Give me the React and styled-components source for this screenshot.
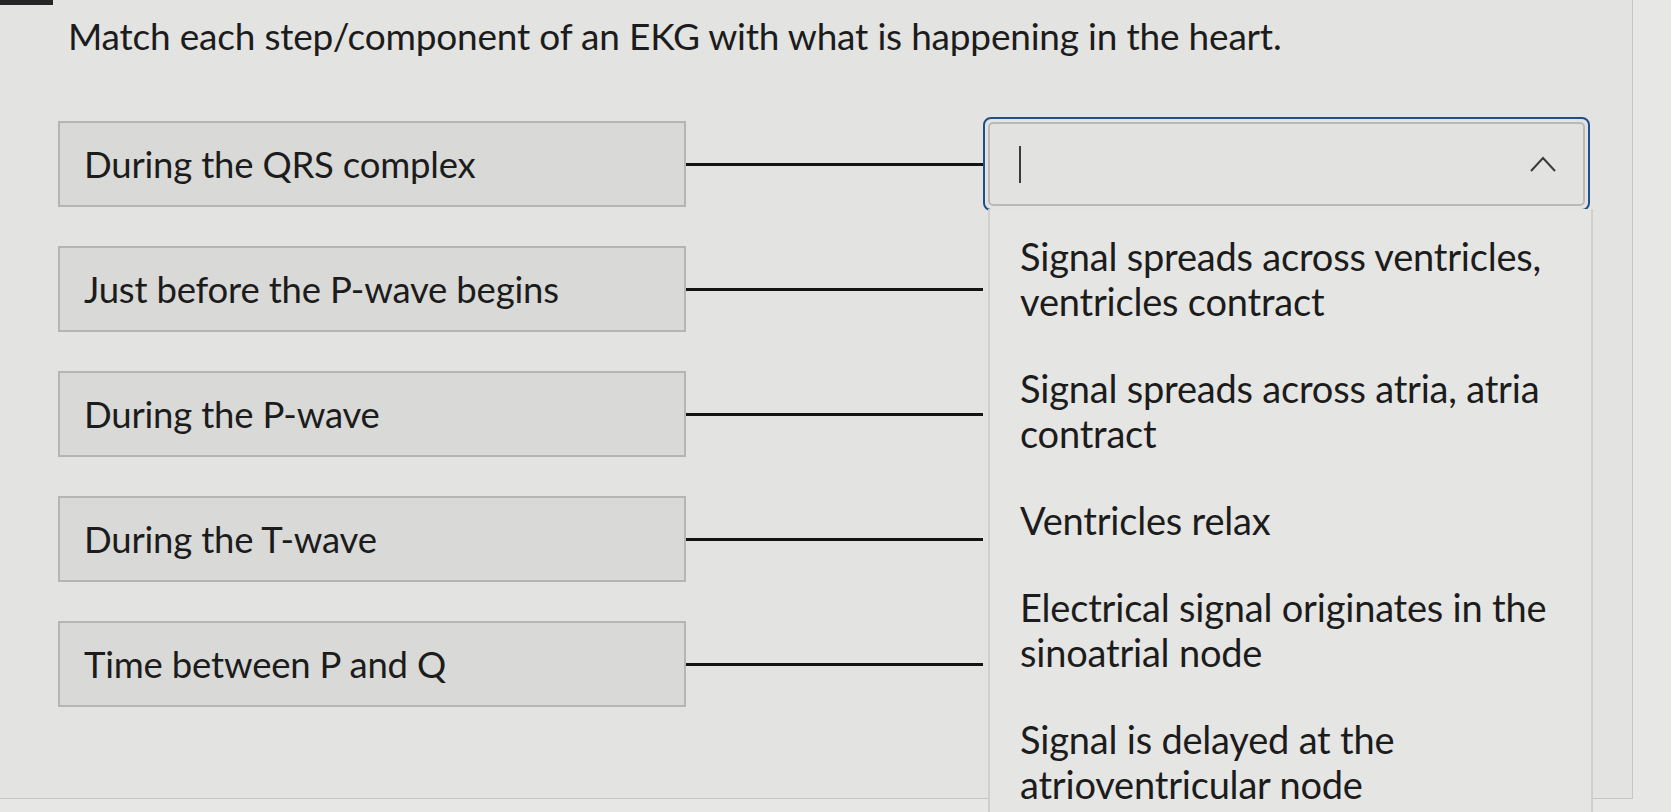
import React from 'react';
import styled, { createGlobalStyle } from 'styled-components';

const GlobalStyle = createGlobalStyle`
  html, body {
    margin: 0;
    padding: 0;
    background: #e7e7e5;
    font-family: Lato, 'Open Sans', sans-serif;
    color: #1c1c1c;
  }
`;

const Page = styled.div`
  width: 1671px;
  height: 812px;
  overflow: hidden;
  display: flex;
`;

const Panel = styled.main`
  width: 1633px;
  height: 799px;
  box-sizing: border-box;
  flex-shrink: 0;
  background: #e3e3e1;
  border-right: 1px solid #c6c6c4;
  border-bottom: 1px solid #c6c6c4;
  padding-left: 58px;
  display: flex;
  flex-direction: column;
`;

const TopTab = styled.div`
  width: 53px;
  height: 5px;
  margin-left: -58px;
  background: #262626;
`;

const Title = styled.h1`
  margin: 9px 0 0 10px;
  font-size: 37px;
  font-weight: 400;
  line-height: 44px;
  letter-spacing: -0.2px;
  white-space: nowrap;
`;

const Rows = styled.div`
  margin-top: 59px;
  display: flex;
  flex-direction: column;
  gap: 31px;
`;

const Row = styled.div`
  height: 94px;
  display: flex;
  align-items: center;
`;

const Prompt = styled.div`
  width: 628px;
  height: 86px;
  box-sizing: border-box;
  flex-shrink: 0;
  display: flex;
  align-items: center;
  padding-left: 24px;
  background: #d9d9d7;
  border: 2px solid #b5b5b3;
  font-size: 36.5px;
  letter-spacing: -0.2px;
`;

const Connector = styled.div`
  width: 297px;
  height: 3px;
  background: #141414;
`;

const SelectWrap = styled.div`
  position: relative;
  z-index: ${(p) => (p.$open ? 2 : 1)};
  width: 607px;
  height: 94px;
  padding: 3px;
  box-sizing: border-box;
  border-radius: 8px;
  border: 2px solid ${(p) => (p.$open ? '#1f4f88' : 'transparent')};
`;

const Select = styled.div`
  height: 100%;
  box-sizing: border-box;
  border: 2px solid #b9b9b7;
  border-radius: 5px;
  background: #e2e2e0;
  display: flex;
  align-items: center;
  justify-content: space-between;
  padding: 0 26px 0 29px;
`;

const Caret = styled.span`
  width: 2px;
  height: 37px;
  background: #3a3a3a;
`;

const Menu = styled.ul`
  position: absolute;
  top: 100%;
  left: 3px;
  right: -5px;
  height: 620px;
  margin: 0;
  padding: 4px 20px 0 30px;
  list-style: none;
  background: #e5e5e3;
  border-left: 2px solid #d0d0ce;
  border-right: 2px solid #cfcfcd;
`;

const Option = styled.li`
  padding: 21px 0;
  font-size: 38px;
  line-height: 45px;
  letter-spacing: -0.2px;
`;

const prompts = [
  'During the QRS complex',
  'Just before the P-wave begins',
  'During the P-wave',
  'During the T-wave',
  'Time between P and Q',
];

const choices = [
  'Signal spreads across ventricles, ventricles contract',
  'Signal spreads across atria, atria contract',
  'Ventricles relax',
  'Electrical signal originates in the sinoatrial node',
  'Signal is delayed at the atrioventricular node',
];

const ChevronUp = () => (
  <svg width="28" height="18" viewBox="0 0 28 18" fill="none">
    <path d="M2 16 L14 3 L26 16" stroke="#3a3a3a" strokeWidth="2" />
  </svg>
);

export default function App() {
  return (
    <Page>
      <GlobalStyle />
      <Panel>
        <TopTab />
        <Title>Match each step/component of an EKG with what is happening in the heart.</Title>
        <Rows>
          {prompts.map((text, i) => (
            <Row key={text}>
              <Prompt>{text}</Prompt>
              <Connector />
              <SelectWrap $open={i === 0}>
                <Select>
                  {i === 0 ? <Caret /> : <span />}
                  {i === 0 && <ChevronUp />}
                </Select>
                {i === 0 && (
                  <Menu>
                    {choices.map((c) => (
                      <Option key={c}>{c}</Option>
                    ))}
                  </Menu>
                )}
              </SelectWrap>
            </Row>
          ))}
        </Rows>
      </Panel>
    </Page>
  );
}
